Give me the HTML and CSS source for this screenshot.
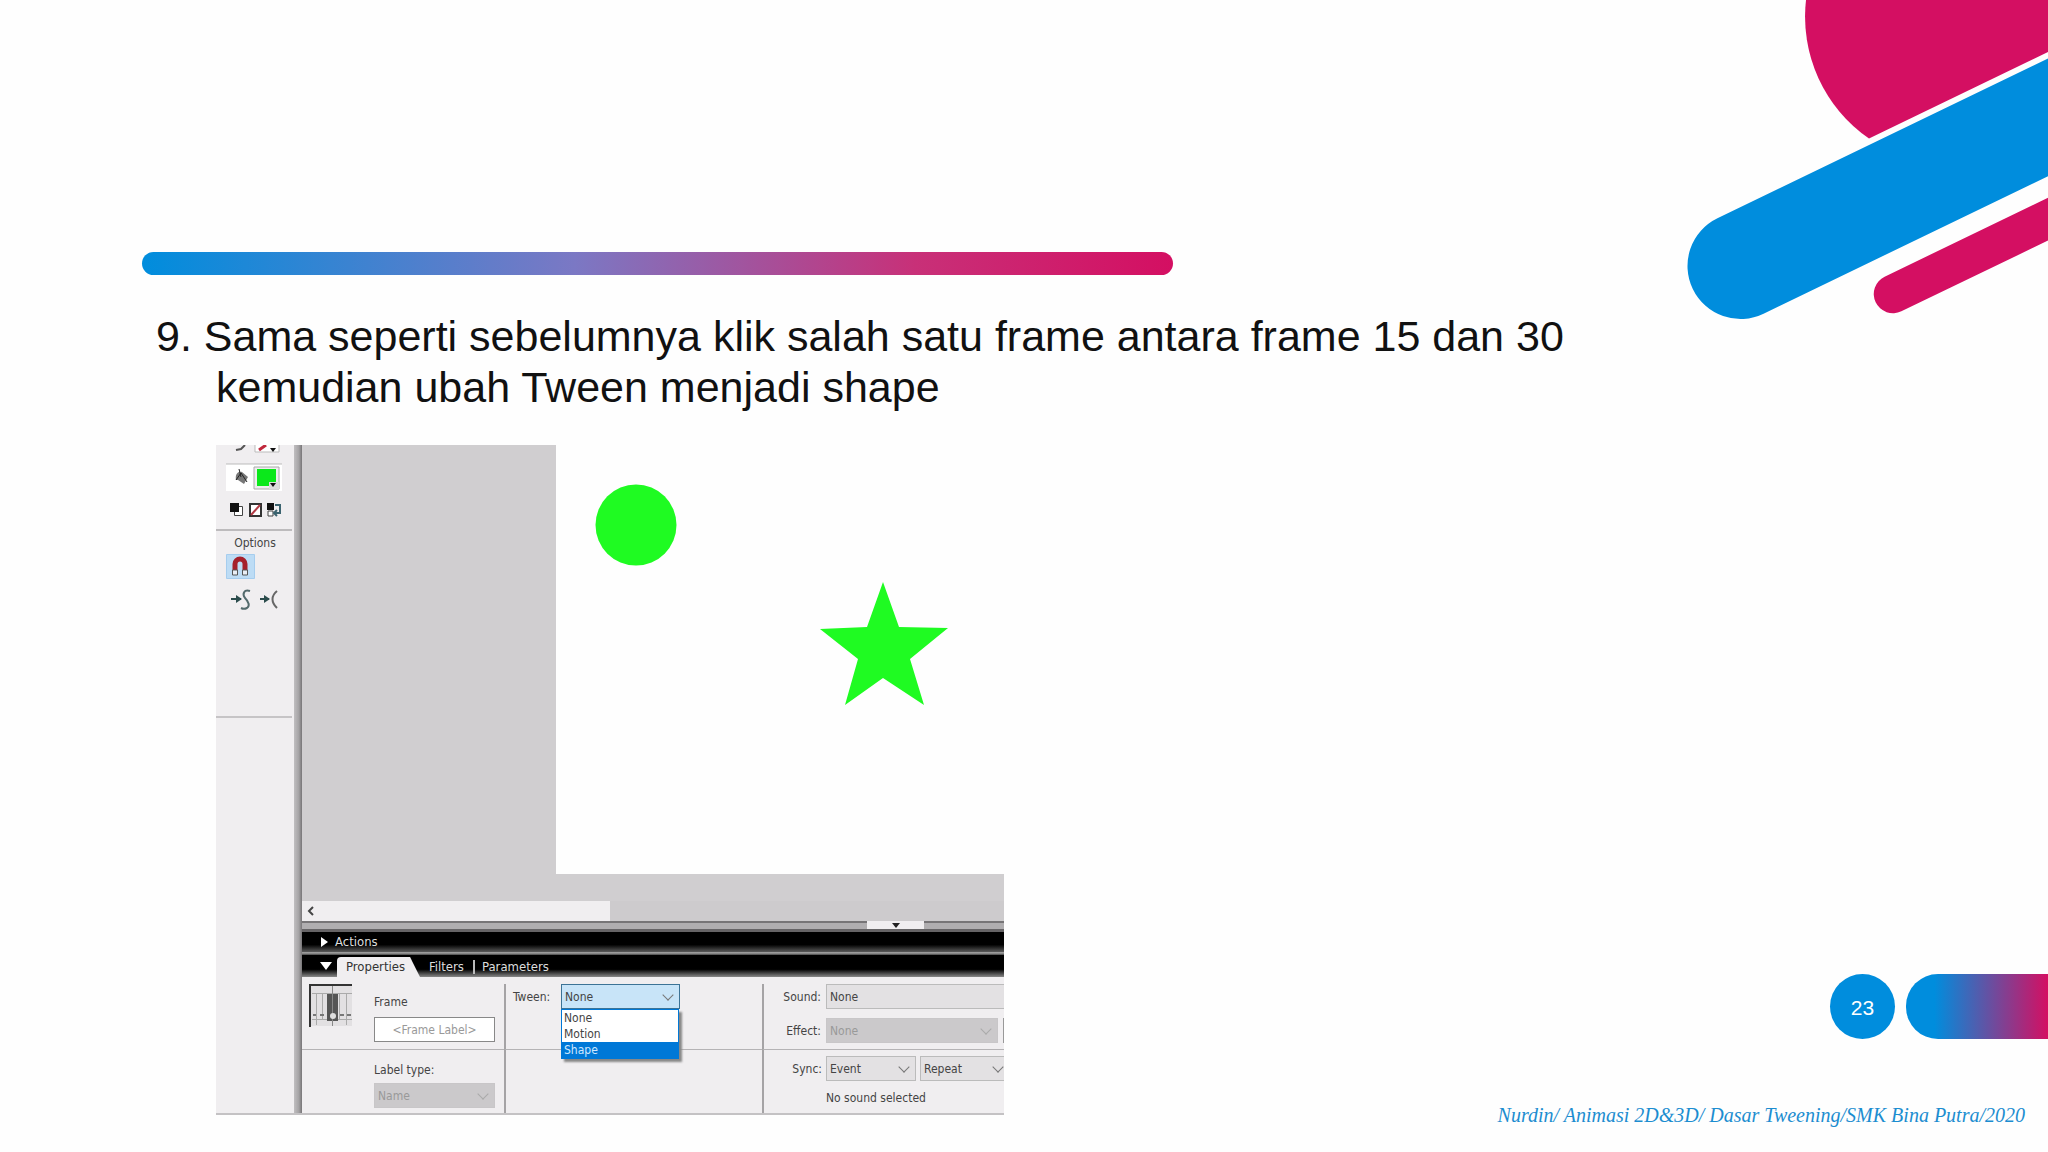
FILE: index.html
```
<!DOCTYPE html>
<html lang="id">

<head>
    <meta charset="utf-8">
    <title>Dasar Tweening</title>
    <link rel="stylesheet" href="styles.css">
</head>

<body>
    <div class="slide">
        <svg class="decor" width="368" height="330" viewBox="0 0 368 330" aria-hidden="true">
            <path d="M126 0A148 148 0 0 0 189 138.500L368 52V0Z" fill="#d40f62"></path>
            <path d="M60.500 266L440 82.500" stroke="#008ddd" stroke-width="106" stroke-linecap="round"></path>
            <path d="M213 294L440 184.500" stroke="#d40f62" stroke-width="38.500" stroke-linecap="round"></path>
        </svg>

        <div class="title-bar"></div>
        <p class="step">9. Sama seperti sebelumnya klik salah satu frame antara frame 15 dan 30 <br>kemudian ubah Tween menjadi shape</p>

        <div class="slide-body">
            <div class="flash">
                <div class="tools">
                    <svg width="78" height="86" viewBox="0 0 78 86" aria-hidden="true">
                        <!-- stroke colour -->
                        <path d="M20 5l5-1 4-4" fill="none" stroke="#555" stroke-width="2"></path>
                        <path d="M39 0v7h24V0" fill="#fff" stroke="#bbb"></path>
                        <path d="M43 5l7-5" stroke="#c0283c" stroke-width="3"></path>
                        <path d="M54 3h6l-3 4z" fill="#111"></path>
                        <!-- fill colour -->
                        <path d="M10 19h56v27H10z" fill="#fff"></path>
                        <path d="M10 19h56" stroke="#bbb"></path>
                        <path d="M20 35c-1-6 2-9 6-8l6 5-4 7-6-4z" fill="#777"></path>
                        <path d="M23 24l2 8M25 28l6 9M20 35l5-7" stroke="#222" fill="none"></path>
                        <path d="M38 22h25v22H38z" fill="#eee" stroke="#aaa"></path>
                        <path d="M41 24h19v17H41z" fill="#0be81b"></path>
                        <path d="M53 37h10v7H53z" fill="#ddd"></path>
                        <path d="M54 38h6l-3 4z" fill="#111"></path>
                        <!-- swatches -->
                        <path d="M18.500 61.500h8v9h-8z" fill="#fff" stroke="#444"></path>
                        <path d="M14 58h9v9h-9z" fill="#111"></path>
                        <path d="M34 59h11v12H34z" fill="#fff" stroke="#333" stroke-width="2"></path>
                        <path d="M35 70l9-10" stroke="#b33a45" stroke-width="2"></path>
                        <path d="M51 58h7v7h-7z" fill="#111"></path>
                        <path d="M52 66h5v5h-5z" fill="#fff" stroke="#444"></path>
                        <path d="M59 60h5v8h-5M61 65l-3 3 3 3" fill="none" stroke="#3c6470" stroke-width="2"></path>
                        <path d="M0 85h76" stroke="#bdbbbd" stroke-width="2"></path>
                    </svg>
                    <span class="tools-label">Options</span>
                    <svg width="78" height="168" viewBox="0 0 78 168" aria-hidden="true">
                        <path d="M10.500 3.500h28v24h-28z" fill="#bddcf5" stroke="#a6cdee"></path>
                        <path d="M19 19v-6a5 5 0 0 1 10 0v6" fill="none" stroke="#a5202c" stroke-width="5"></path>
                        <path d="M16.500 19h5v5h-5zM26.500 19h5v5h-5z" fill="#e8eef5" stroke="#555"></path>
                        <path d="M15 48h10" stroke="#2b4c4c" stroke-width="2"></path>
                        <path d="M20 44l6 4-6 4z" fill="#2b4c4c"></path>
                        <path d="M34 40c-6-2-8 3-5 7 4 4 5 8 2 10-2 1-4 1-6 0" fill="none" stroke="#536a6c" stroke-width="2"></path>
                        <path d="M44 48h9" stroke="#2b4c4c" stroke-width="2"></path>
                        <path d="M48 44l6 4-6 4z" fill="#2b4c4c"></path>
                        <path d="M61 40c-6 5-6 11 0 17" fill="none" stroke="#666" stroke-width="2"></path>
                        <path d="M0 166h76" stroke="#c6c4c6" stroke-width="2"></path>
                    </svg>
                </div>

                <div class="work">
                    <div class="stage">
                        <div class="canvas">
                            <svg width="448" height="429" viewBox="0 0 448 429" fill="#1ffb22" role="img" aria-label="Shape">
                                <circle cx="80" cy="80" r="40.500"></circle>
                                <path d="M327 137L343 182 392 183 354 214 368 260 327 233 289 260 302 214 264 184 311 182Z"></path>
                            </svg>
                        </div>
                    </div>
                    <div class="scroll">
                        <button class="scroll-track" aria-label="Scroll">
                            <svg width="8" height="10" viewBox="0 0 8 10"><path d="M6 1L2 5l4 4" fill="none" stroke="#444" stroke-width="2"></path></svg>
                        </button>
                    </div>
                    <div class="splitter"><button class="splitter-handle" aria-label="Panel"></button></div>

                    <div class="bar">
                        <svg class="arrow" width="10" height="10" viewBox="0 0 10 10"><path d="M1 0l7 5-7 5z" fill="#fff"></path></svg>
                        <button class="bar-item">Actions</button>
                    </div>
                    <div class="bar">
                        <svg class="arrow" width="12" height="16" viewBox="0 0 12 16"><path d="M0 1h12L6 9z" fill="#fff"></path></svg>
                        <button class="bar-item tab-active">Properties</button>
                        <button class="bar-item tab">Filters</button>
                        <button class="bar-item tab">Parameters</button>
                    </div>

                    <div class="panel">
                        <div class="cell frame-cell">
                            <svg width="43" height="43" viewBox="0 0 43 43" aria-hidden="true">
                                <path d="M2 2h41v40H2z" fill="#e2e0e2"></path>
                                <path d="M1 43V1h42" fill="none" stroke="#333" stroke-width="2"></path>
                                <path d="M3 9.500h40M3 35.500h40M7.500 9v32M13.500 9v26M30.500 9v26M37.500 9v32" stroke="#aaa"></path>
                                <path d="M18 10h11v27H18z" fill="#555"></path>
                                <path d="M23.500 2v40" stroke="#888"></path>
                                <path d="M4 31h3M11 31h4M31 31h4M38 31h4" stroke="#777" stroke-width="2"></path>
                                <circle cx="24" cy="32" r="3" fill="#ddd"></circle>
                            </svg>
                            <div class="stack">
                                <label for="frame-label">Frame</label>
                                <input id="frame-label" class="field" type="text" value="&lt;Frame Label&gt;">
                            </div>
                        </div>
                        <div class="cell">
                            <div class="row">
                                <label class="tween-label" for="tween">Tween:</label>
                                <span class="picker tween">
                                    <select id="tween" class="field"><option>None</option><option>Motion</option><option>Shape</option></select>
                                    <span class="menu"><span>None</span><span>Motion</span><span class="selected">Shape</span></span>
                                </span>
                            </div>
                        </div>
                        <div class="cell">
                            <div class="row">
                                <label class="sound-label" for="sound">Sound:</label>
                                <span class="picker wide"><select id="sound" class="field"><option>None</option></select></span>
                            </div>
                            <div class="row">
                                <label class="sound-label" for="effect">Effect:</label>
                                <span class="picker effect"><select id="effect" class="field" disabled><option>None</option></select></span>
                                <button class="edit" aria-label="Edit"></button>
                            </div>
                        </div>
                        <div class="cell lower label-cell">
                            <div class="stack">
                                <label for="label-type">Label type:</label>
                                <span class="picker"><select id="label-type" class="field" disabled><option>Name</option></select></span>
                            </div>
                        </div>
                        <div class="cell lower"></div>
                        <div class="cell lower">
                            <div class="row">
                                <label class="sound-label" for="sync">Sync:</label>
                                <span class="picker sync"><select id="sync" class="field"><option>Event</option></select></span>
                                <span class="picker sync"><select class="field" aria-label="Repeat"><option>Repeat</option></select></span>
                            </div>
                            <div class="status">No sound selected</div>
                        </div>
                    </div>
                </div>
            </div>

            <div class="slide-end">
                <div class="page">
                    <span class="page-number">23</span>
                    <span class="page-pill"></span>
                </div>
                <div class="credit">Nurdin/ Animasi 2D&amp;3D/ Dasar Tweening/SMK Bina Putra/2020</div>
            </div>
        </div>
    </div>
</body>

</html>
```
FILE: styles.css
```
* {
    box-sizing: border-box;
}

body {
    margin: 0;
    background: #fefefe;
    font-family: "Liberation Sans", Arial, sans-serif;
}

svg {
    display: block;
    flex: none;
}

button {
    border: 0;
    padding: 0;
    font: inherit;
    color: inherit;
    background: none;
}

.slide {
    position: relative;
    min-height: 100vh;
    padding-top: 252px;
    overflow: hidden;
}

.decor {
    position: absolute;
    top: 0;
    right: 0;
}

.title-bar {
    width: 1031px;
    max-width: 80%;
    height: 23px;
    margin-left: 142px;
    border-radius: 12px;
    background: linear-gradient(90deg, #008ddd, #7b78c4 42%, #c83078 75%, #d40f62);
}

.step {
    margin: 36px 0 32px 156px;
    padding-left: 60px;
    text-indent: -60px;
    font-size: 43px;
    line-height: 51px;
    color: #111;
}

.slide-body {
    display: flex;
    align-items: flex-start;
    justify-content: space-between;
    padding-left: 216px;
}

/* flash window */
.flash {
    display: flex;
    flex: 0 1 788px;
    min-width: 0;
    overflow: hidden;
    border-bottom: 2px solid #c4c2c4;
    background: #f0eef0;
    font-family: "DejaVu Sans Condensed", "DejaVu Sans", sans-serif;
    font-size: 12px;
    line-height: 16px;
    color: #444;
}

.tools {
    flex: none;
    width: 78px;
}

.tools-label {
    display: block;
    height: 20px;
    line-height: 24px;
    text-align: center;
}

.work {
    flex: 1;
    min-width: 0;
    padding-left: 8px;
    background: linear-gradient(90deg, #c0bec0, #a5a3a5 60%, #777577) 0 0 / 8px 100% no-repeat;
}

.stage {
    padding: 0 0 27px 254px;
    background: #d0ced0;
}

.canvas {
    overflow: hidden;
    background: #fefefe;
}

.scroll {
    height: 20px;
    background: #cdcbcd;
}

.scroll-track {
    display: flex;
    align-items: center;
    width: 308px;
    height: 20px;
    padding-left: 5px;
    background: #f0eef0;
}

.splitter {
    display: flex;
    justify-content: flex-end;
    height: 11px;
    padding-right: 80px;
    border-top: 2px solid #777577;
    border-bottom: 3px solid #666466;
    background: #b0aeb0;
}

.splitter-handle {
    display: flex;
    justify-content: center;
    width: 57px;
    height: 8px;
    margin-top: -2px;
    background: #f0eef0;
}

.splitter-handle::before {
    content: "";
    margin-top: 2px;
    border: 4px solid transparent;
    border-top: 5px solid #222;
    border-bottom: 0;
}

.bar {
    display: flex;
    align-items: center;
    height: 23px;
    padding: 0 0 3px 18px;
    background: linear-gradient(#000 55%, #555 85%, #aaa 90%, #444);
    color: #ddd;
}

.bar + .bar {
    height: 22px;
    padding-bottom: 0;
    align-items: flex-end;
    background: linear-gradient(#000 65%, #888);
}

.bar-item {
    font-size: 13px;
}

.arrow {
    margin-right: 5px;
}

.tab {
    height: 20px;
    padding: 0 9px;
}

.tab + .tab {
    background: linear-gradient(#bbb, #bbb) 0 3px / 2px 14px no-repeat;
}

.tab-active {
    width: 83px;
    height: 20px;
    padding-left: 9px;
    border-radius: 4px 0 0;
    clip-path: polygon(0 0, 88% 0, 100% 100%, 0 100%);
    text-align: left;
    background: #f0eef0;
    color: #333;
}

.panel {
    display: grid;
    grid-template-columns: 202px 258px 1fr;
    grid-template-rows: 65px 64px;
    padding-top: 7px;
    background: #f0eef0;
}

.cell {
    min-width: 0;
    padding-left: 7px;
    border-left: 2px solid #a5a3a5;
}

.cell:nth-child(3n + 1) {
    border-left: 0;
}

.lower {
    padding-top: 6px;
    border-top: 1px solid #b5b3b5;
}

.frame-cell {
    display: flex;
    gap: 22px;
}

.label-cell {
    padding-left: 72px;
}

.stack {
    display: flex;
    flex-direction: column;
    gap: 7px;
    width: 121px;
}

.frame-cell .stack {
    padding-top: 10px;
}

.label-cell .stack {
    padding-top: 6px;
    gap: 5px;
}

.row {
    display: flex;
    align-items: center;
    gap: 5px;
    width: 310px;
    margin-bottom: 9px;
}

.lower .row {
    gap: 4px;
}

.tween-label {
    width: 43px;
}

.sound-label {
    width: 50px;
    text-align: right;
}

.lower .sound-label {
    width: 51px;
}

.field {
    display: block;
    appearance: none;
    width: 100%;
    height: 25px;
    padding: 0 3px;
    border: 1px solid #bbb;
    border-radius: 0;
    background: #e3e1e3;
    font: inherit;
    color: #444;
}

input.field {
    border-color: #888;
    background: #fff;
    color: #999;
    text-align: center;
}

.field:disabled {
    border-color: #c8c6c8;
    background: #cbc9cb;
    color: #999;
    opacity: 1;
}

.picker {
    position: relative;
}

.picker::after {
    content: "";
    position: absolute;
    top: 7px;
    right: 8px;
    width: 7px;
    height: 7px;
    border: solid #777;
    border-width: 0 1px 1px 0;
    transform: rotate(45deg);
}

.picker:has(:disabled)::after {
    border-color: #aaa;
}

.tween {
    width: 119px;
}

.tween .field {
    border-color: #3c7396;
    background: #c8e4f8;
}

.wide {
    width: 240px;
}

.effect {
    width: 172px;
}

.sync {
    width: 90px;
}

.edit {
    width: 30px;
    height: 25px;
    border: 1px solid #999;
}

.menu {
    position: absolute;
    top: 25px;
    left: 0;
    width: 118px;
    border: 1px solid #0078d7;
    background: #fff;
    box-shadow: 3px 3px 2px #888;
}

.menu span {
    display: block;
    height: 16px;
    padding-left: 2px;
}

.menu .selected {
    background: #0078d7;
    color: #cfe8ff;
}

.status {
    padding-left: 55px;
}

/* page number and credit */
.slide-end {
    display: flex;
    flex: none;
    flex-direction: column;
    align-items: flex-end;
    padding-top: 529px;
}

.page {
    display: flex;
    gap: 11px;
}

.page-number {
    width: 65px;
    height: 65px;
    border-radius: 50%;
    background: #008ddd;
    color: #fff;
    font-size: 21px;
    line-height: 67px;
    text-align: center;
}

.page-pill {
    width: 142px;
    height: 65px;
    border-radius: 32px 0 0 32px;
    background: linear-gradient(90deg, #008ddd 20%, #d40f62);
}

.credit {
    margin: 63px 23px 0 0;
    font-family: "Monotype Corsiva", "Liberation Serif", serif;
    font-size: 20px;
    font-style: italic;
    line-height: 26px;
    color: #1c8dd0;
}
```
